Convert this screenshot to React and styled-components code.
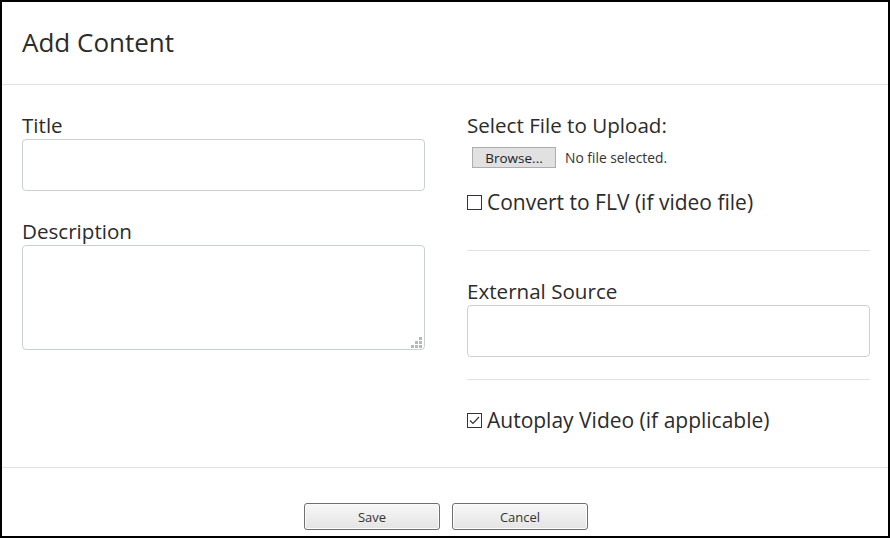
import React, { useState } from "react";
import styled, { createGlobalStyle } from "styled-components";

const GlobalStyle = createGlobalStyle`
  html, body {
    margin: 0;
    padding: 0;
    background: #ffffff;
  }
  * {
    box-sizing: border-box;
  }
`;

const CheckBox = ({ checked, onChange, children }) => (
  <CheckRow onClick={() => onChange(!checked)}>
    <Box>
      {checked && (
        <svg width="11" height="9" viewBox="0 0 11 9">
          <path d="M1 4.5 L4 7.5 L10 1" fill="none" stroke="#333" strokeWidth="1.2" />
        </svg>
      )}
    </Box>
    <span>{children}</span>
  </CheckRow>
);

const App = () => {
  const [convert, setConvert] = useState(false);
  const [autoplay, setAutoplay] = useState(true);

  return (
    <>
      <GlobalStyle />
      <Frame>
        <Header>
          <Heading>Add Content</Heading>
        </Header>
        <Body>
          <Column>
            <Label>Title</Label>
            <TextInput type="text" />
            <Label $gap={28}>Description</Label>
            <AreaWrap>
              <TextArea />
              <Grip>
                <svg width="11" height="11" viewBox="0 0 11 11">
                  <rect x="8" y="0" width="3" height="3" fill="#b8b8b8" />
                  <rect x="4" y="4" width="3" height="3" fill="#b8b8b8" />
                  <rect x="8" y="4" width="3" height="3" fill="#b8b8b8" />
                  <rect x="0" y="8" width="3" height="3" fill="#b8b8b8" />
                  <rect x="4" y="8" width="3" height="3" fill="#b8b8b8" />
                  <rect x="8" y="8" width="3" height="3" fill="#b8b8b8" />
                </svg>
              </Grip>
            </AreaWrap>
          </Column>
          <Column>
            <Label>Select File to Upload:</Label>
            <FileRow>
              <BrowseButton type="button">Browse...</BrowseButton>
              <FileName>No file selected.</FileName>
            </FileRow>
            <CheckSlot $gap={22}>
              <CheckBox checked={convert} onChange={setConvert}>
                Convert to FLV (if video file)
              </CheckBox>
            </CheckSlot>
            <Rule $gap={36} />
            <Label $gap={28}>External Source</Label>
            <TextInput type="text" />
            <Rule $gap={22} />
            <CheckSlot $gap={28}>
              <CheckBox checked={autoplay} onChange={setAutoplay}>
                Autoplay Video (if applicable)
              </CheckBox>
            </CheckSlot>
          </Column>
        </Body>
        <Footer>
          <ActionButton type="button">Save</ActionButton>
          <ActionButton type="button">Cancel</ActionButton>
        </Footer>
      </Frame>
    </>
  );
};

const Frame = styled.div`
  width: 890px;
  height: 538px;
  border: 2px solid #000;
  overflow: hidden;
  font-family: "Open Sans", "Noto Sans", sans-serif;
  color: #2b2b2b;
  background: #fff;
`;

const Header = styled.div`
  height: 83px;
  padding: 24px 20px 0;
  border-bottom: 1px solid #e2e2e2;
`;

const Heading = styled.h4`
  margin: 0;
  font-size: 26px;
  line-height: 32px;
  font-weight: 400;
`;

const Body = styled.div`
  display: grid;
  grid-template-columns: 403px 403px;
  column-gap: 42px;
  padding: 28px 20px 0;
  height: 383px;
  border-bottom: 1px solid #e2e2e2;
`;

const Column = styled.div`
  display: flex;
  flex-direction: column;
`;

const Label = styled.label`
  display: block;
  font-size: 20.6px;
  line-height: 24px;
  margin-top: ${(p) => p.$gap || 0}px;
  margin-bottom: 2px;
`;

const TextInput = styled.input`
  width: 100%;
  height: 52px;
  border: 1px solid #c9d1d1;
  border-radius: 4px;
  padding: 6px 12px;
  font-size: 16px;
  font-family: inherit;
  outline: none;
`;

const AreaWrap = styled.div`
  position: relative;
  height: 105px;
`;

const TextArea = styled.textarea`
  display: block;
  width: 100%;
  height: 100%;
  border: 1px solid #c9d1d1;
  border-radius: 4px;
  padding: 6px 12px;
  font-size: 16px;
  font-family: inherit;
  resize: none;
  outline: none;
`;

const Grip = styled.div`
  position: absolute;
  right: 3px;
  bottom: 2px;
  line-height: 0;
`;

const FileRow = styled.div`
  display: flex;
  align-items: center;
  gap: 9px;
  margin-top: 8px;
  padding-left: 5px;
`;

const BrowseButton = styled.button`
  width: 84px;
  height: 21px;
  padding: 0;
  border: 1px solid #adadad;
  border-radius: 0;
  background: #e1e1e1;
  font-family: inherit;
  font-size: 13.5px;
  color: #222;
`;

const FileName = styled.span`
  font-size: 13.8px;
  color: #333;
`;

const CheckSlot = styled.div`
  margin-top: ${(p) => p.$gap}px;
`;

const CheckRow = styled.div`
  display: flex;
  align-items: center;
  gap: 5px;
  font-size: 21px;
  line-height: 24px;
  cursor: pointer;
`;

const Box = styled.span`
  width: 15px;
  height: 15px;
  border: 1px solid #333;
  display: flex;
  align-items: center;
  justify-content: center;
  margin-top: 1px;
`;

const Rule = styled.hr`
  margin: ${(p) => p.$gap}px 0 0;
  border: 0;
  border-top: 1px solid #e2e2e2;
  width: 100%;
`;

const Footer = styled.div`
  display: flex;
  justify-content: center;
  gap: 12px;
  padding: 35px 0 0 2px;
`;

const ActionButton = styled.button`
  width: 136px;
  height: 27px;
  border: 1px solid #6f6f6f;
  border-radius: 3px;
  background: linear-gradient(#f7f7f7, #e4e4e4);
  font-family: inherit;
  font-size: 13px;
  color: #333;
  box-shadow: inset 0 0 0 1px #fcfcfc;
`;

export default App;
